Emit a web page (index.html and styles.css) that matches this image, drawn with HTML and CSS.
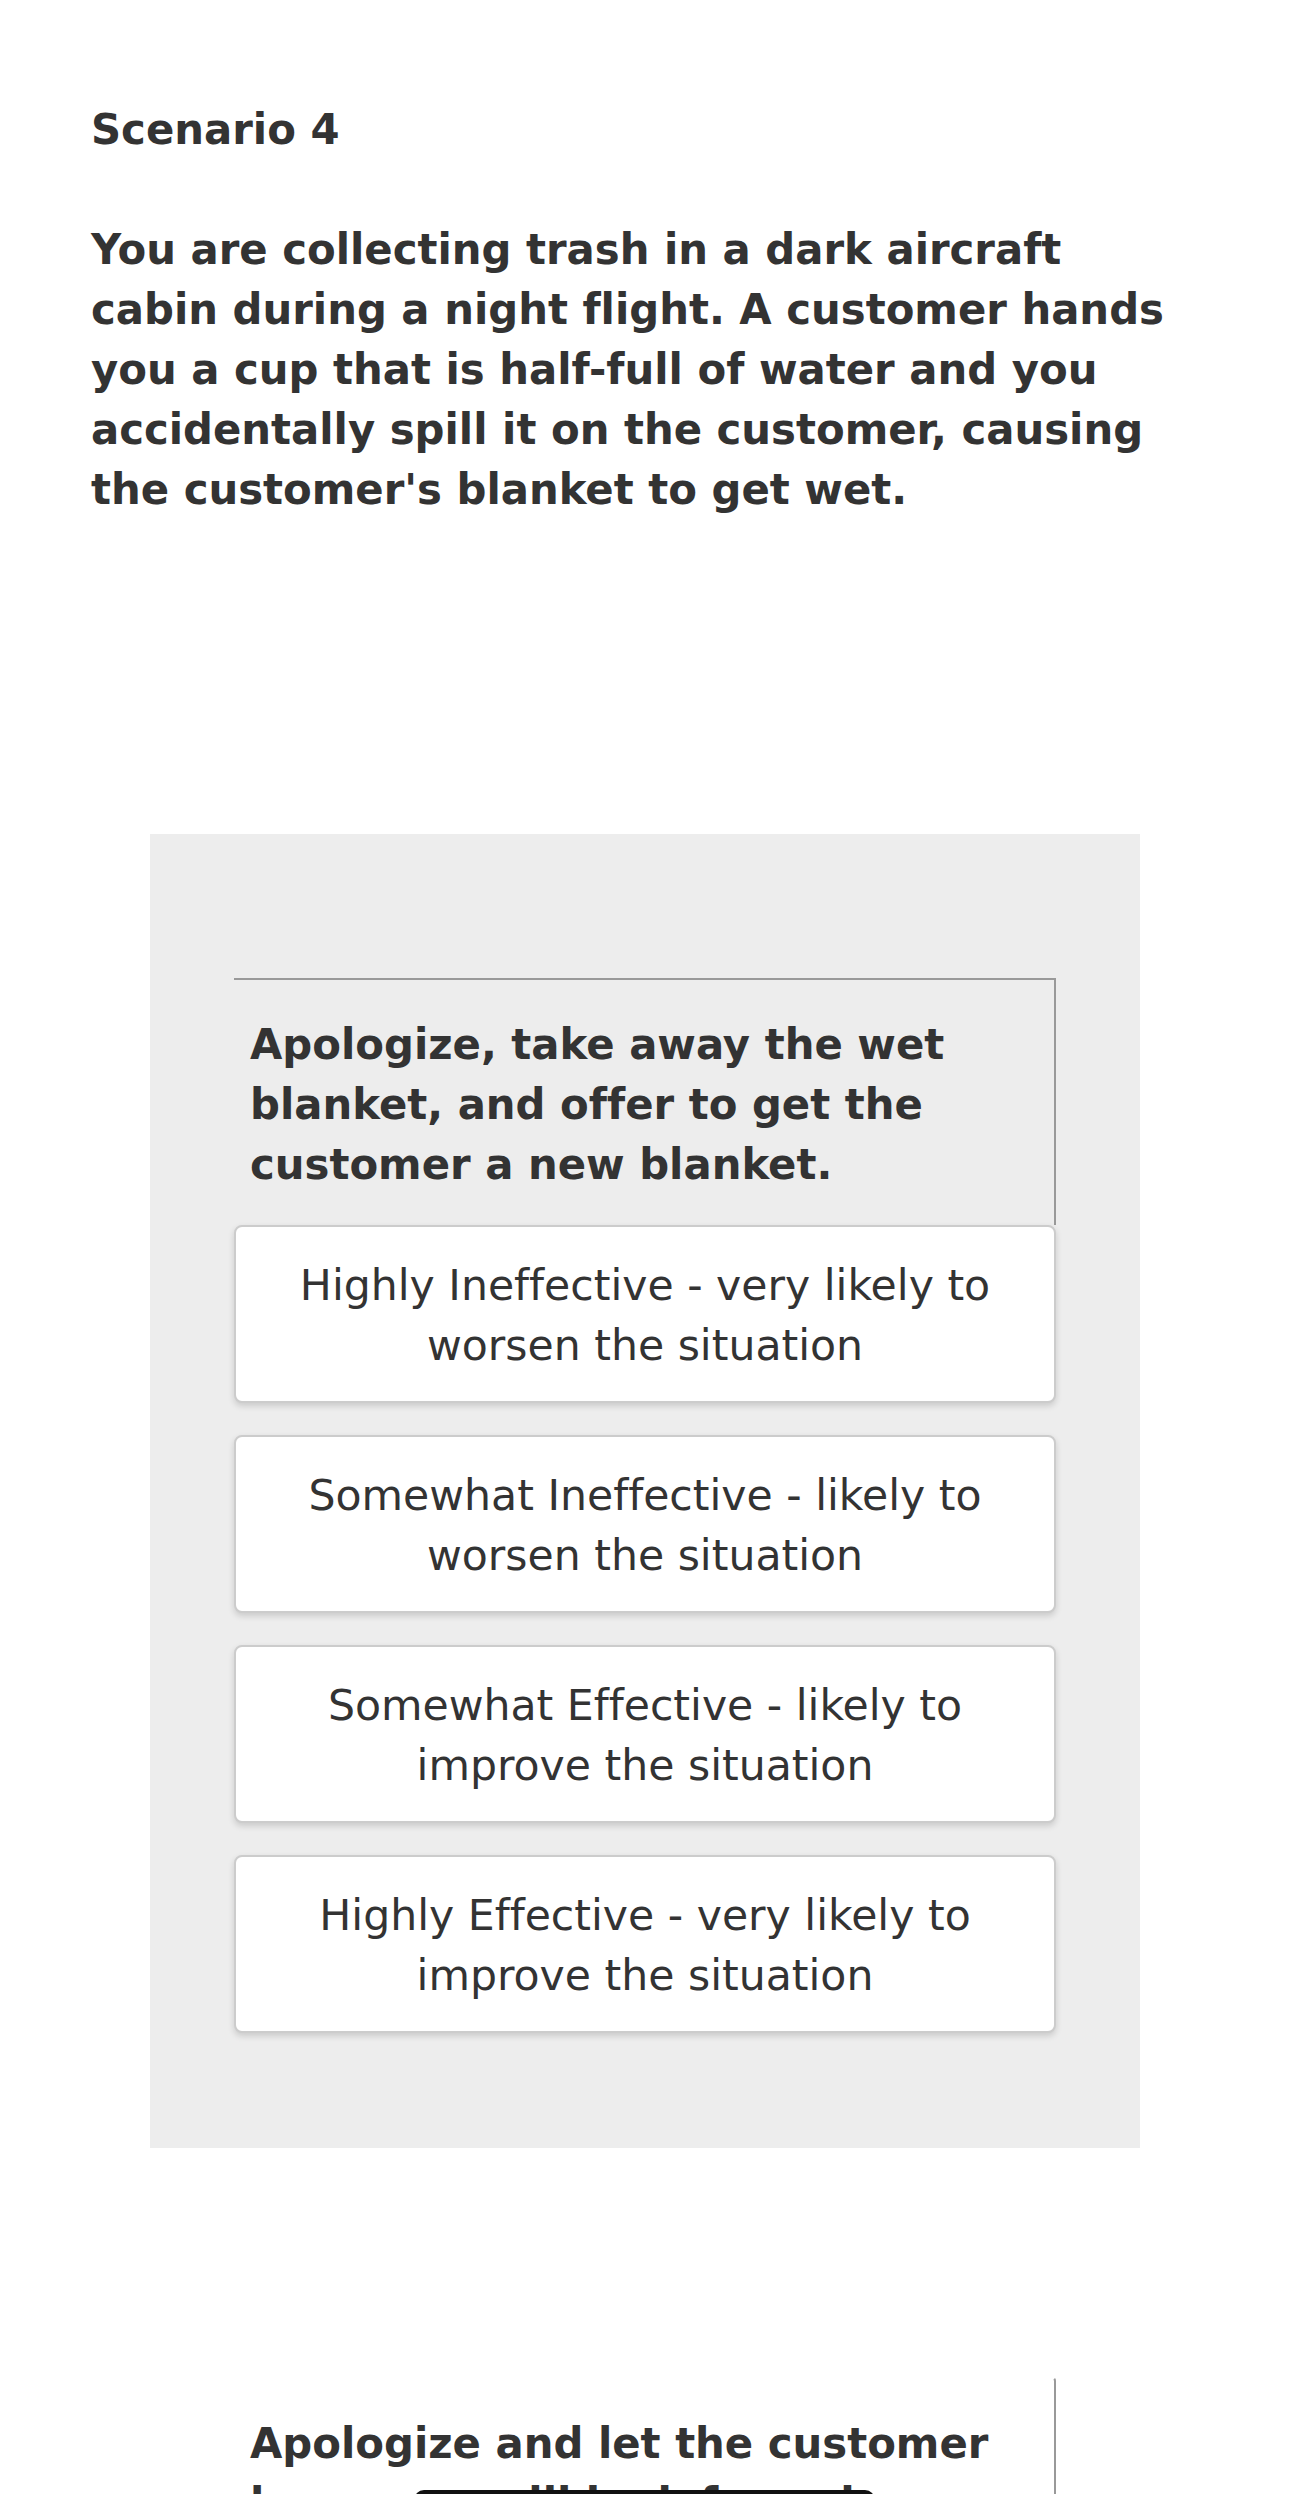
FILE: index.html
```html
<!DOCTYPE html>
<html lang="en">
<head>
  <meta charset="UTF-8" />
  <meta name="viewport" content="width=device-width, initial-scale=1" />
  <title>Scenario 4</title>
  <link rel="stylesheet" href="styles.css">
</head>
<body>

  <div class="scenario">
    <h2>Scenario 4</h2>
    <p>You are collecting trash in a dark aircraft cabin during a night flight. A customer hands you a cup that is half-full of water and you accidentally spill it on the customer, causing the customer's blanket to get wet.</p>
  </div>

  <div class="panel active">
    <div class="question">
      <p>Apologize, take away the wet blanket, and offer to get the customer a new blanket.</p>
    </div>
    <div class="options">
      <button class="option">Highly Ineffective - very likely to worsen the situation</button>
      <button class="option">Somewhat Ineffective - likely to worsen the situation</button>
      <button class="option">Somewhat Effective - likely to improve the situation</button>
      <button class="option">Highly Effective - very likely to improve the situation</button>
    </div>
  </div>

  <div class="panel">
    <div class="question plain">
      <p>Apologize and let the customer know you will look for a dry blanket to use.</p>
    </div>
  </div>

  <div class="toast"></div>

</body>
</html>
```

FILE: styles.css
```css
body {
  margin: 0;
  background-color: #fff;
  color: #333;
  font-family: "DejaVu Sans", Verdana, sans-serif;
  font-size: 41.8px;
  line-height: 60px;
  font-variant-ligatures: none;
}
.scenario {
  padding: 100px 110px 0 91px;
}
.scenario h2 {
  margin: 0 0 60px;
  font-size: 41.8px;
  font-weight: bold;
  line-height: 60px;
}
.scenario p {
  margin: 0;
  font-weight: bold;
}
.panel {
  margin: 85px 149px 0 150px;
  padding: 144px 84px 115px;
}
.panel.active {
  margin-top: 314px;
  background-color: #ededed;
}
.question {
  border-top: 2px solid #999;
  border-right: 2px solid #999;
  padding: 35px 0 30px 16px;
}
.question.plain {
  border-top-color: transparent;
  border-top-right-radius: 4px;
}
.question p {
  margin: 0;
  font-weight: bold;
}
.options {
  display: flex;
  flex-direction: column;
  gap: 32px;
}
.option {
  display: block;
  width: 100%;
  margin: 0;
  padding: 28px 30px 26px;
  background-color: #fff;
  color: #333;
  border: 2px solid #ccc;
  border-radius: 8px;
  box-shadow: 0 3px 6px rgba(0, 0, 0, 0.15);
  font-family: inherit;
  font-size: 42.6px;
  line-height: 60px;
  font-variant-ligatures: none;
  text-align: center;
  cursor: pointer;
}
.option:hover {
  background-color: #f7f7f7;
}
/* leiste unten am bildschirm */
.toast {
  position: fixed;
  left: 414px;
  bottom: -20px;
  width: 461px;
  height: 24px;
  border-radius: 10px;
  background-color: #111;
}
```
